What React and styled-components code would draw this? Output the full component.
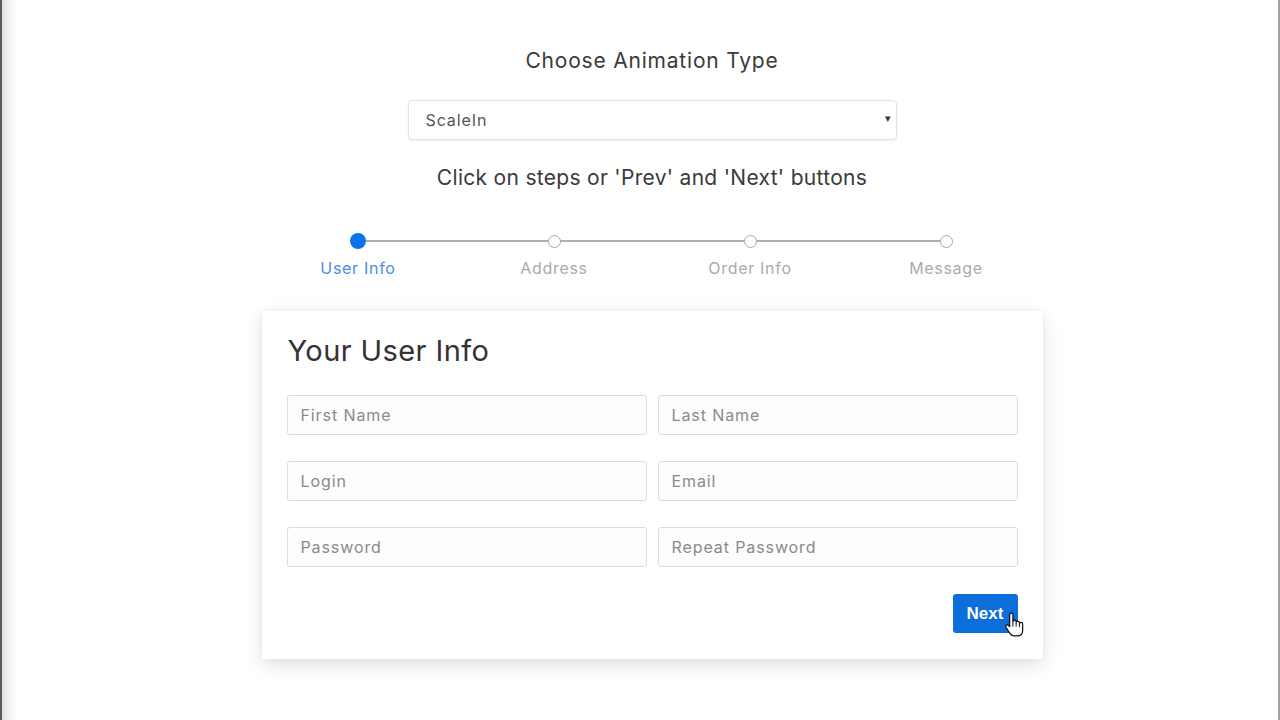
import styled, { createGlobalStyle } from 'styled-components';

const GlobalStyle = createGlobalStyle`
  html, body {
    margin: 0;
    padding: 0;
    background: #fff;
  }
  body {
    font-family: Inter, "Open Sans", sans-serif;
    color: #333;
  }
  * {
    box-sizing: border-box;
  }
`;

const steps = ['User Info', 'Address', 'Order Info', 'Message'];

const fields = [
  'First Name',
  'Last Name',
  'Login',
  'Email',
  'Password',
  'Repeat Password'
];

const HandCursor = () => (
  <svg width="20" height="26" viewBox="0 0 18 24">
    <path
      d="M5 2.5a1.5 1.5 0 0 1 3 0V9a1.5 1.5 0 0 1 3 0v1a1.5 1.5 0 0 1 3 0v1a1.5 1.5 0 0 1 3 0v6c0 3-2 5-5 5H9c-2 0-3-1-4-2.5L1.6 14.2a1.4 1.4 0 0 1 2-1.9L5 13.5Z"
      fill="#fff"
      stroke="#111"
      strokeWidth="1.1"
      strokeLinejoin="round"
    />
    <path d="M8 9v4.5M11 10v3.5M14 11v3" stroke="#111" strokeWidth="0.9" />
  </svg>
);

const App = () => {
  const active = 0;

  return (
    <Frame>
      <GlobalStyle />
      <Main>
        <Title>Choose Animation Type</Title>
        <SelectWrap>
          <Select defaultValue="ScaleIn">
            <option>ScaleIn</option>
            <option>FadeIn</option>
            <option>SlideIn</option>
          </Select>
          <Arrow>▾</Arrow>
        </SelectWrap>
        <Hint>Click on steps or 'Prev' and 'Next' buttons</Hint>

        <Stepper>
          <Track />
          {steps.map((step, i) => (
            <Step key={step}>
              <Dot $active={i === active} />
              <StepLabel $active={i === active}>{step}</StepLabel>
            </Step>
          ))}
        </Stepper>

        <Card>
          <CardTitle>Your User Info</CardTitle>
          <FieldGrid>
            {fields.map((f) => (
              <Input key={f} placeholder={f} />
            ))}
          </FieldGrid>
          <Actions>
            <NextButton>
              Next
              <Cursor>
                <HandCursor />
              </Cursor>
            </NextButton>
          </Actions>
        </Card>
      </Main>
    </Frame>
  );
};

const Frame = styled.div`
  width: 1280px;
  height: 720px;
  overflow: hidden;
  border-left: 2px solid #5c5c5c;
  border-right: 2px solid #a0a0a0;
  background: linear-gradient(to right, #e4e4e4 0, #f6f6f6 8px, #fff 16px);
`;

const Main = styled.div`
  padding-left: 24px;
  display: flex;
  flex-direction: column;
  align-items: center;
`;

const Title = styled.h2`
  margin: 49px 0 0;
  font-size: 21px;
  line-height: 24px;
  letter-spacing: 0.8px;
  font-weight: 400;
  color: #3a3a3a;
`;

const Hint = styled(Title)`
  margin-top: 26px;
  letter-spacing: 0.3px;
`;

const SelectWrap = styled.div`
  position: relative;
  margin-top: 27px;
  width: 489px;
  height: 40px;
`;

const Select = styled.select`
  appearance: none;
  width: 100%;
  height: 100%;
  padding: 0 17px;
  border: 1px solid #e2e2e2;
  border-radius: 4px;
  background: #fff;
  box-shadow: 0 1px 3px rgba(0, 0, 0, 0.08);
  font-family: Inter, "Open Sans", sans-serif;
  font-size: 16px;
  letter-spacing: 0.9px;
  color: #555;
  outline: none;
`;

const Arrow = styled.span`
  position: absolute;
  right: 6px;
  top: 11px;
  font-size: 11px;
  color: #333;
  pointer-events: none;
`;

const Stepper = styled.div`
  position: relative;
  margin-top: 43px;
  width: 784px;
  display: flex;
`;

const Track = styled.div`
  position: absolute;
  left: 12.5%;
  right: 12.5%;
  top: 7px;
  height: 2px;
  background: #b0b0b0;
`;

const Step = styled.div`
  flex: 1;
  display: flex;
  flex-direction: column;
  align-items: center;
  position: relative;
`;

const Dot = styled.span`
  width: ${(p) => (p.$active ? '16px' : '13px')};
  height: ${(p) => (p.$active ? '16px' : '13px')};
  margin-top: ${(p) => (p.$active ? '0' : '1.5px')};
  margin-bottom: ${(p) => (p.$active ? '0' : '1.5px')};
  border-radius: 50%;
  background: ${(p) => (p.$active ? '#0b72ee' : '#fff')};
  border: ${(p) => (p.$active ? 'none' : '1.5px solid #a8a8a8')};
`;

const StepLabel = styled.span`
  margin-top: 9px;
  font-size: 16px;
  line-height: 20px;
  letter-spacing: 0.7px;
  color: ${(p) => (p.$active ? '#4a8ee0' : '#ababab')};
`;

const Card = styled.div`
  margin-top: 33px;
  width: 781px;
  padding: 22px 25px 26px;
  background: #fff;
  box-shadow: 0 6px 18px rgba(0, 0, 0, 0.12), 0 0 6px rgba(0, 0, 0, 0.04);
`;

const CardTitle = styled.h1`
  margin: 0 0 0 1px;
  font-size: 29px;
  line-height: 36px;
  letter-spacing: 0.4px;
  font-weight: 400;
  color: #333;
`;

const FieldGrid = styled.div`
  margin-top: 26px;
  display: grid;
  grid-template-columns: 360px 360px;
  column-gap: 11px;
  row-gap: 26px;
`;

const Input = styled.input`
  height: 40px;
  padding: 0 13px;
  border: 1px solid #dcdcdc;
  border-radius: 3px;
  background: #fdfdfd;
  font-family: Inter, "Open Sans", sans-serif;
  font-size: 16px;
  letter-spacing: 0.9px;
  color: #555;
  outline: none;

  &::placeholder {
    color: #8a8a8a;
  }
`;

const Actions = styled.div`
  margin-top: 27px;
  display: flex;
  justify-content: flex-end;
`;

const NextButton = styled.button`
  position: relative;
  width: 65px;
  height: 39px;
  border: none;
  border-radius: 3px;
  background: #0b6edb;
  color: #fff;
  font-family: "Liberation Sans", Arial, sans-serif;
  font-size: 17px;
  font-weight: 700;
  cursor: pointer;
`;

const Cursor = styled.span`
  position: absolute;
  left: 51px;
  top: 18px;
  display: block;
  line-height: 0;
`;

export default App;
